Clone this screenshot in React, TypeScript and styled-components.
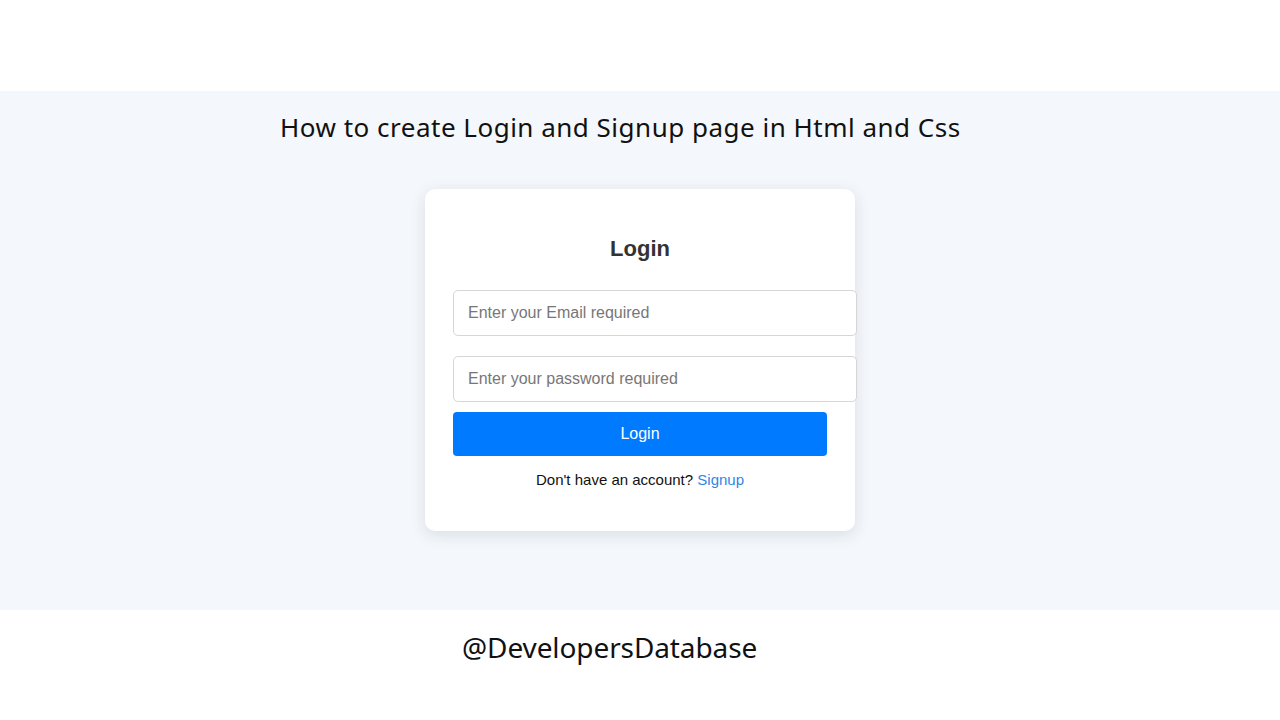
import styled, { createGlobalStyle } from "styled-components";

const GlobalStyle = createGlobalStyle`
  html, body {
    margin: 0;
    padding: 0;
    background: #fff;
  }
  * {
    box-sizing: border-box;
  }
`;

const Page = styled.div`
  width: 1280px;
  height: 720px;
  display: flex;
  flex-direction: column;
  background: #fff;
  overflow: hidden;
`;

const TopSpace = styled.div`
  height: 91px;
`;

const Band = styled.section`
  height: 519px;
  background-color: #f4f7fb;
  display: flex;
  flex-direction: column;
`;

const Heading = styled.h1`
  margin: 0;
  padding: 18px 0 0 280px;
  font-family: "Noto Sans", "Open Sans", sans-serif;
  font-weight: 400;
  font-size: 26px;
  line-height: 36px;
  color: #111;
  letter-spacing: 0.5px;
  white-space: nowrap;
`;

const CardRow = styled.div`
  display: flex;
  padding: 44px 0 0 425px;
`;

const Card = styled.form`
  width: 430px;
  height: 342px;
  background: #fff;
  border-radius: 10px;
  box-shadow: 0 4px 16px rgba(30, 45, 80, 0.12);
  padding: 45px 28px 0;
  font-family: "Liberation Sans", Arial, sans-serif;
`;

const CardTitle = styled.h2`
  margin: 0 0 26px;
  text-align: center;
  font-size: 22px;
  line-height: 30px;
  font-weight: 700;
  color: #333;
`;

const Input = styled.input<{ $gap: number }>`
  display: block;
  box-sizing: content-box;
  width: calc(100% - 2px);
  height: 20px;
  padding: 12px 16px 12px 14px;
  margin-bottom: ${(p) => p.$gap}px;
  border: 1px solid #d6d6d6;
  border-radius: 5px;
  background: #fff;
  font-family: "Liberation Sans", Arial, sans-serif;
  font-size: 16px;
  color: #333;
  outline: none;
  &::placeholder {
    color: #777;
  }
`;

const SubmitButton = styled.button`
  display: block;
  width: 100%;
  height: 44px;
  border: none;
  border-radius: 4px;
  background-color: #007bff;
  color: #fff;
  font-family: "Liberation Sans", Arial, sans-serif;
  font-size: 16px;
`;

const SwitchText = styled.p`
  margin: 15px 0 0;
  text-align: center;
  font-size: 15px;
  line-height: 18px;
  color: #111;
  & > a {
    color: #2f86e6;
    text-decoration: none;
  }
`;

const Footer = styled.footer`
  padding: 18px 0 0 462px;
  font-family: "Noto Sans", "Open Sans", sans-serif;
  font-size: 28px;
  line-height: 38px;
  letter-spacing: -0.1px;
  color: #111;
`;

const App = () => {
  return (
    <Page>
      <GlobalStyle />
      <TopSpace />
      <Band>
        <Heading>How to create Login and Signup page in Html and Css</Heading>
        <CardRow>
          <Card onSubmit={(e) => e.preventDefault()}>
            <CardTitle>Login</CardTitle>
            <Input $gap={20} type="email" placeholder="Enter your Email required" />
            <Input $gap={10} type="password" placeholder="Enter your password required" />
            <SubmitButton type="submit">Login</SubmitButton>
            <SwitchText>
              Don't have an account? <a href="#">Signup</a>
            </SwitchText>
          </Card>
        </CardRow>
      </Band>
      <Footer>@DevelopersDatabase</Footer>
    </Page>
  );
};

export default App;
